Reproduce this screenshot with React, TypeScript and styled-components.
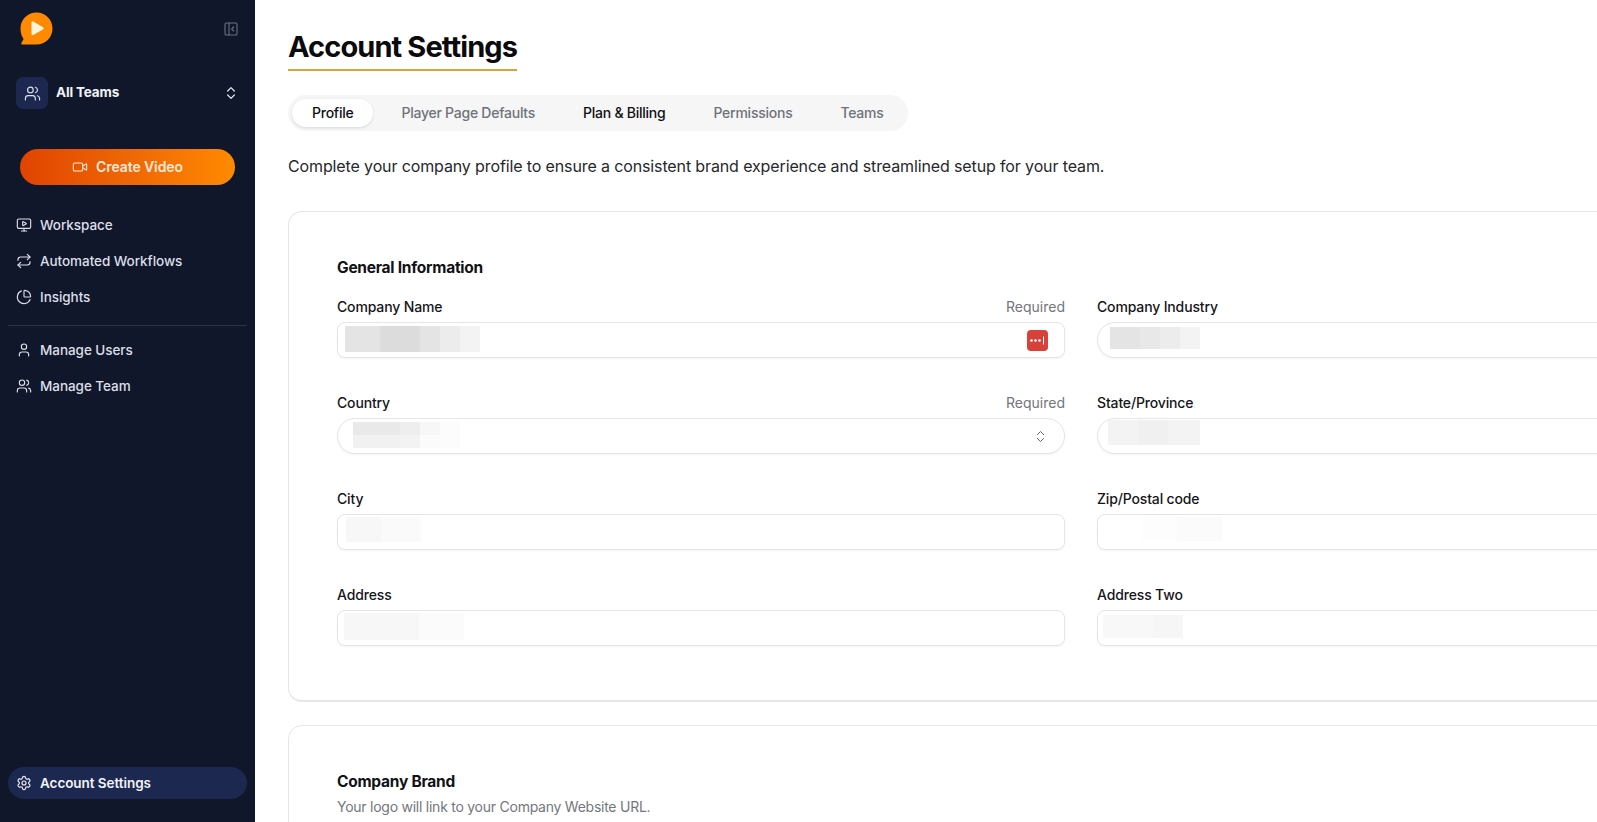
import * as React from "react";
import styled, { createGlobalStyle } from "styled-components";
import {
  ChartPie,
  ChevronsUpDown,
  MonitorPlay,
  PanelLeftClose,
  Repeat,
  Settings,
  User,
  Users,
  Video,
} from "lucide-react";

const GlobalStyle = createGlobalStyle`
  html, body {
    margin: 0;
    height: 100%;
    overflow: hidden;
    background: #fff;
    font-family: Inter, "Noto Sans", sans-serif;
  }
  #root { height: 100%; }
`;

const Page = styled.div`
  display: flex;
  height: 822px;
  width: 1597px;
  overflow: hidden;
`;

const Sidebar = styled.aside`
  display: flex;
  flex-direction: column;
  flex: 0 0 255px;
  box-sizing: border-box;
  padding: 0 8px 23px;
  background: #10172a;
  color: #e8eaf0;
`;

const LogoRow = styled.div`
  display: flex;
  align-items: center;
  justify-content: space-between;
  height: 34px;
  margin: 12px 8px 0 12px;
  color: #6b7385;
`;

const TeamRow = styled.div`
  display: flex;
  align-items: center;
  height: 32px;
  margin: 31px 8px 0;
`;

const TeamIcon = styled.div`
  display: flex;
  align-items: center;
  justify-content: center;
  width: 32px;
  height: 32px;
  margin-right: 8px;
  border-radius: 7px;
  background: #1c2850;
  color: #dfe3ee;
`;

const TeamName = styled.div`
  flex: 1;
  margin-top: -2px;
  font-size: 13.5px;
  font-weight: 700;
  letter-spacing: -0.15px;
  color: #f2f3f7;
`;

const CreateButton = styled.button`
  display: flex;
  align-items: center;
  justify-content: center;
  gap: 8px;
  height: 36px;
  margin: 40px 12px 22px;
  padding: 0 0 1px;
  border: 0;
  border-radius: 18px;
  background: linear-gradient(90deg, #e04400 0%, #f06a06 55%, #ff8a00 100%);
  color: #fde9d8;
  font-family: inherit;
  font-size: 14px;
  font-weight: 600;
  letter-spacing: -0.1px;
`;

const NavItem = styled.div<{ $active?: boolean }>`
  display: flex;
  align-items: center;
  gap: 8px;
  height: 36px;
  padding-left: 8px;
  font-size: 13.5px;
  font-weight: ${(p) => (p.$active ? 600 : 500)};
  letter-spacing: -0.05px;
  color: ${(p) => (p.$active ? "#f2f3f7" : "#dcdfe8")};
`;

const Divider = styled.div`
  height: 1px;
  margin: 10px 0 6px;
  background: #2a3244;
`;

const BottomItem = styled(NavItem)`
  height: 32px;
  margin-top: auto;
  border-radius: 16px;
  background: #1c2850;
`;

const Main = styled.main`
  flex: 1;
  min-width: 0;
  padding: 0 0 0 33px;
  background: #fff;
`;

const Title = styled.h1`
  display: inline-block;
  margin: 27px 0 0;
  padding-bottom: 3px;
  border-bottom: 2px solid #d6a534;
  font-size: 29px;
  line-height: 39px;
  font-weight: 700;
  letter-spacing: -0.9px;
  color: #0b0b0d;
`;

const Tabs = styled.div`
  display: flex;
  align-items: center;
  gap: 8px;
  width: max-content;
  height: 36px;
  margin-top: 24px;
  padding: 0 4px;
  border-radius: 18px;
  background: #f6f6f6;
`;

const Tab = styled.div<{ $active?: boolean; $dark?: boolean }>`
  padding: 0 20px;
  height: 28px;
  line-height: 28px;
  border-radius: 14px;
  font-size: 14px;
  font-weight: 500;
  letter-spacing: -0.25px;
  color: ${(p) => (p.$active || p.$dark ? "#0f1014" : "#6f7379")};
  background: ${(p) => (p.$active ? "#fff" : "transparent")};
  box-shadow: ${(p) => (p.$active ? "0 1px 3px rgba(0,0,0,.12)" : "none")};
`;

const Intro = styled.p`
  margin: 24px 0 0;
  font-size: 16px;
  line-height: 22px;
  letter-spacing: -0.125px;
  color: #26282c;
`;

const Card = styled.section`
  box-sizing: border-box;
  width: 1587px;
  margin-top: 34px;
  padding: 44px 48px 54px;
  border: 1px solid #e6e6e6;
  border-bottom-width: 2px;
  border-radius: 14px;
  background: #fff;

  & + & {
    margin-top: 23px;
    border-bottom-width: 1px;
  }
`;

const CardTitle = styled.h2`
  margin: 0 0 17px;
  font-size: 15.5px;
  line-height: 24px;
  font-weight: 700;
  letter-spacing: -0.25px;
  color: #111216;
`;

const CardHint = styled.p`
  margin: -14px 0 0;
  font-size: 14px;
  line-height: 20px;
  letter-spacing: -0.25px;
  color: #74777d;
`;

const FieldGrid = styled.div`
  display: grid;
  grid-template-columns: 728px 728px;
  column-gap: 32px;
  row-gap: 35px;
`;

const LabelRow = styled.div`
  display: flex;
  justify-content: space-between;
  height: 20px;
  margin-bottom: 5px;
  line-height: 20px;
  font-size: 14px;
  letter-spacing: -0.15px;
`;

const Label = styled.span`
  font-weight: 500;
  color: #15161a;
`;

const Required = styled.span`
  letter-spacing: 0;
  color: #73767c;
`;

const InputBox = styled.div<{ $pill?: boolean }>`
  display: flex;
  align-items: center;
  justify-content: space-between;
  box-sizing: border-box;
  height: 36px;
  padding-right: 16px;
  border: 1px solid #e5e5e5;
  border-radius: ${(p) => (p.$pill ? "18px" : "8px")};
  box-shadow: 0 1px 2px rgba(0, 0, 0, 0.05);
  background: #fff;
  color: #5a5d63;
`;

const Redaction = styled.div<{ $left: number; $height: number; $top: number }>`
  display: flex;
  height: ${(p) => p.$height}px;
  margin-left: ${(p) => p.$left}px;
  margin-top: ${(p) => p.$top}px;
  filter: blur(0.6px);
`;

const Cell = styled.div<{ $w: number; $shade: string }>`
  width: ${(p) => p.$w}px;
  background: ${(p) => p.$shade};
`;

function Logo() {
  return (
    <svg width="34" height="34" viewBox="0 0 34 34">
      <path
        d="M16.500 0.500C25.500 0.500 32.500 7.500 32.500 16.500S25.500 32.500 16.500 32.500H2.500c-1 0-1.500-1-1-1.800L3.600 27C1.600 24.200 0.500 20.500 0.500 16.500 0.500 7.500 7.500 0.500 16.500 0.500Z"
        fill="#ff8a00"
      />
      <path
        d="M11.500 10.500c0-1 1-1.500 1.800-1L23 15.200c.8.500.8 1.700 0 2.200l-9.700 5.700c-.8.500-1.800-.1-1.800-1Z"
        fill="#fff3dc"
      />
    </svg>
  );
}

function PasswordBadge() {
  return (
    <svg width="21" height="21" viewBox="0 0 21 21">
      <rect width="21" height="21" rx="4" fill="#d8403a" />
      <circle cx="4.500" cy="10.500" r="1.300" fill="#fff" />
      <circle cx="8.500" cy="10.500" r="1.300" fill="#fff" />
      <circle cx="12.500" cy="10.500" r="1.300" fill="#fff" />
      <rect x="16" y="6.500" width="1" height="8" fill="#fff" />
    </svg>
  );
}

type Blur = { left: number; top: number; height: number; cells: [number, string][] };

type FieldData = {
  label: string;
  required?: boolean;
  pill?: boolean;
  badge?: boolean;
  chevrons?: boolean;
  blur: Blur;
};

const fields: FieldData[] = [
  {
    label: "Company Name",
    required: true,
    badge: true,
    blur: {
      left: 7,
      top: -2,
      height: 26,
      cells: [[35, "#e4e4e4"], [40, "#dcdcdc"], [20, "#e4e4e4"], [20, "#ececec"], [20, "#f3f3f3"]],
    },
  },
  {
    label: "Company Industry",
    pill: true,
    blur: {
      left: 12,
      top: -4,
      height: 22,
      cells: [[30, "#e4e4e4"], [20, "#e8e8e8"], [20, "#ececec"], [20, "#f3f3f3"]],
    },
  },
  {
    label: "Country",
    required: true,
    pill: true,
    chevrons: true,
    blur: {
      left: 15,
      top: -2,
      height: 26,
      cells: [
        [47, "linear-gradient(#e9e9e9 50%, #f1f1f1 50%)"],
        [20, "linear-gradient(#eeeeee 50%, #f3f3f3 50%)"],
        [20, "linear-gradient(#f7f7f7 50%, #fbfbfb 50%)"],
        [20, "#fcfcfc"],
      ],
    },
  },
  {
    label: "State/Province",
    pill: true,
    blur: {
      left: 10,
      top: -7,
      height: 25,
      cells: [[30, "#f3f3f3"], [30, "#f0f0f0"], [32, "#f3f3f3"]],
    },
  },
  {
    label: "City",
    blur: { left: 8, top: -5, height: 25, cells: [[35, "#f7f7f7"], [40, "#fafafa"]] },
  },
  {
    label: "Zip/Postal code",
    blur: { left: 44, top: -6, height: 24, cells: [[35, "#fdfdfd"], [45, "#fbfbfb"]] },
  },
  {
    label: "Address",
    blur: { left: 6, top: -3, height: 27, cells: [[75, "#f7f7f7"], [45, "#fbfbfb"]] },
  },
  {
    label: "Address Two",
    blur: { left: 5, top: -3, height: 23, cells: [[50, "#f8f8f8"], [30, "#f6f6f6"]] },
  },
];

function Field({ field }: { field: FieldData }) {
  const { blur } = field;
  return (
    <div>
      <LabelRow>
        <Label>{field.label}</Label>
        {field.required && <Required>Required</Required>}
      </LabelRow>
      <InputBox $pill={field.pill}>
        <Redaction $left={blur.left} $top={blur.top} $height={blur.height}>
          {blur.cells.map(([w, shade], i) => (
            <Cell key={i} $w={w} $shade={shade} />
          ))}
        </Redaction>
        {field.badge && <PasswordBadge />}
        {field.chevrons && <ChevronsUpDown size={15} strokeWidth={1.5} />}
      </InputBox>
    </div>
  );
}

export default function App() {
  return (
    <Page>
      <GlobalStyle />
      <Sidebar>
        <LogoRow>
          <Logo />
          <PanelLeftClose size={16} strokeWidth={1.6} />
        </LogoRow>
        <TeamRow>
          <TeamIcon>
            <Users size={17} strokeWidth={1.6} />
          </TeamIcon>
          <TeamName>All Teams</TeamName>
          <ChevronsUpDown size={16} strokeWidth={1.8} />
        </TeamRow>
        <CreateButton>
          <Video size={16} strokeWidth={1.6} />
          Create Video
        </CreateButton>
        <NavItem>
          <MonitorPlay size={16} strokeWidth={1.7} />
          Workspace
        </NavItem>
        <NavItem>
          <Repeat size={16} strokeWidth={1.7} />
          Automated Workflows
        </NavItem>
        <NavItem>
          <ChartPie size={16} strokeWidth={1.7} />
          Insights
        </NavItem>
        <Divider />
        <NavItem>
          <User size={16} strokeWidth={1.7} />
          Manage Users
        </NavItem>
        <NavItem>
          <Users size={16} strokeWidth={1.7} />
          Manage Team
        </NavItem>
        <BottomItem $active>
          <Settings size={16} strokeWidth={1.7} />
          Account Settings
        </BottomItem>
      </Sidebar>
      <Main>
        <Title>Account Settings</Title>
        <Tabs>
          <Tab $active>Profile</Tab>
          <Tab>Player Page Defaults</Tab>
          <Tab $dark>Plan &amp; Billing</Tab>
          <Tab>Permissions</Tab>
          <Tab>Teams</Tab>
        </Tabs>
        <Intro>
          Complete your company profile to ensure a consistent brand experience and streamlined setup for your team.
        </Intro>
        <Card>
          <CardTitle>General Information</CardTitle>
          <FieldGrid>
            {fields.map((f) => (
              <Field key={f.label} field={f} />
            ))}
          </FieldGrid>
        </Card>
        <Card>
          <CardTitle>Company Brand</CardTitle>
          <CardHint>Your logo will link to your Company Website URL.</CardHint>
        </Card>
      </Main>
    </Page>
  );
}
